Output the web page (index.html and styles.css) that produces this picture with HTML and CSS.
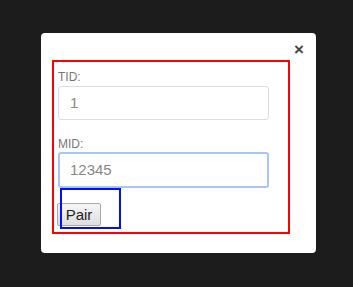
FILE: index.html
```html
<!DOCTYPE html>
<html>
<head>
<meta charset="utf-8">
<link rel="stylesheet" href="styles.css">
</head>
<body>
<div class="modal">
  <span class="close">&times;</span>
  <div class="form">
    <label class="lbl">TID:</label>
    <div class="input">1</div>
    <label class="lbl lbl2">MID:</label>
    <div class="input focus">12345</div>
    <button class="btn">Pair</button>
    <div class="hl"></div>
  </div>
</div>
</body>
</html>
```
FILE: styles.css
```css
html, body {
  margin: 0;
  padding: 0;
  background: #1c1c1c;
  width: 353px;
  height: 287px;
  overflow: hidden;
  font-family: "Liberation Sans", Arial, sans-serif;
}
.modal {
  position: relative;
  margin: 33px 0 0 41px;
  width: 275px;
  height: 220px;
  box-sizing: border-box;
  background: #fff;
  border-radius: 4px;
  padding: 27px 0 0 11px;
}
.close {
  position: absolute;
  right: 12px;
  top: 8px;
  font-size: 17px;
  line-height: 17px;
  font-weight: bold;
  color: #444;
}
.form {
  position: relative;
  width: 238px;
  height: 174px;
  box-sizing: border-box;
  border: 2px solid #f00;
  padding: 8px 0 0 3px;
  display: flex;
  flex-direction: column;
  align-items: flex-start;
}
.lbl {
  font-size: 12px;
  line-height: 15px;
  color: #777;
  margin-left: 1px;
}
.lbl2 {
  margin-top: 17px;
}
.input {
  width: 211px;
  height: 34px;
  box-sizing: border-box;
  border: 1px solid #ddd;
  border-radius: 3px;
  padding-left: 11px;
  font-size: 15px;
  line-height: 32px;
  color: #888;
  margin-left: 1px;
  margin-top: 1px;
}
.focus {
  height: 36px;
  border: 2px solid #a8c6f2;
  padding-left: 10px;
  line-height: 32px;
  margin-top: 0;
}
.btn {
  margin-top: 15px;
  margin-left: 0;
  width: 44px;
  height: 23px;
  padding: 0;
  font-family: "Liberation Sans", Arial, sans-serif;
  font-size: 15px;
  color: #222;
  border: 1px solid #aaa;
  border-radius: 2px;
  background: linear-gradient(#f6f6f6, #dedede);
}
.hl {
  position: absolute;
  left: 6px;
  top: 126px;
  width: 61px;
  height: 41px;
  box-sizing: border-box;
  border: 2px solid #0010ff;
}
```
